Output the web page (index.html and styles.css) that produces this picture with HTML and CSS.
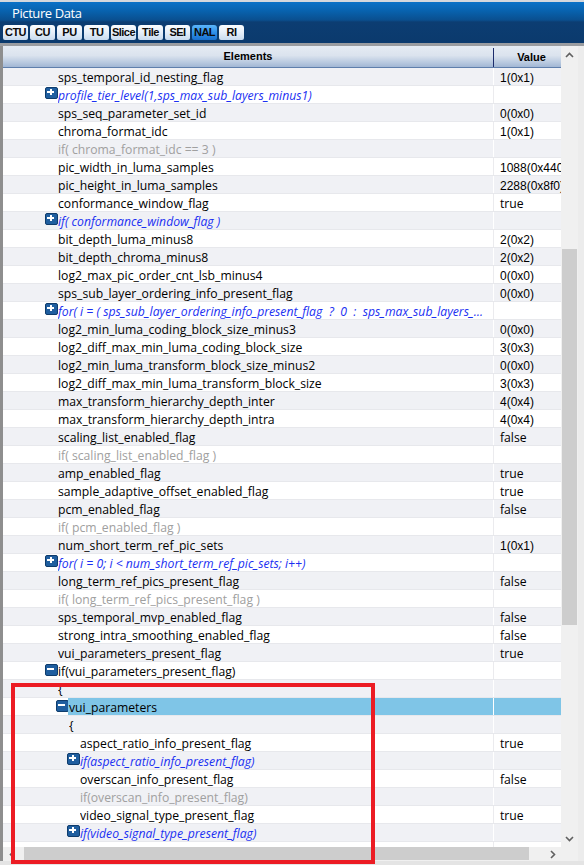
FILE: index.html
```html
<!DOCTYPE html>
<html lang="en">
<head>
    <meta charset="UTF-8">
    <title>Picture Data</title>
    <link rel="stylesheet" href="styles.css">
</head>
<body>
    <div class="window">
        <div class="titlebar">
            <div class="title">Picture Data</div>
            <div class="tabs">
                <span class="tab">CTU</span>
                <span class="tab">CU</span>
                <span class="tab">PU</span>
                <span class="tab">TU</span>
                <span class="tab">Slice</span>
                <span class="tab">Tile</span>
                <span class="tab">SEI</span>
                <span class="tab on">NAL</span>
                <span class="tab">RI</span>
            </div>
        </div>
        <div class="sep"></div>

        <div class="frame">
            <div class="grid">
                <div class="head">
                    <div class="h-el">Elements</div>
                    <div class="h-val">Value</div>
                </div>

                <div class="vscroll">
                    <div class="arrow">
                        <svg width="9" height="6" viewBox="0 0 9 6"><path d="M1 5 L4.5 1.5 L8 5" fill="none" stroke="#606060" stroke-width="1.6"/></svg>
                    </div>
                    <div class="vthumb"></div>
                    <div class="arrow down">
                        <svg width="9" height="6" viewBox="0 0 9 6"><path d="M1 1 L4.5 4.5 L8 1" fill="none" stroke="#606060" stroke-width="1.6"/></svg>
                    </div>
                </div>

                <div class="list">
                    <div class="row"><div class="el"><i class="tog"></i><span class="txt">sps_temporal_id_nesting_flag</span></div><div class="val num">1(0x1)</div></div>
                    <div class="row"><div class="el"><i class="tog plus"></i><span class="txt blue">profile_tier_level(1,sps_max_sub_layers_minus1)</span></div><div class="val"></div></div>
                    <div class="row"><div class="el"><i class="tog"></i><span class="txt">sps_seq_parameter_set_id</span></div><div class="val num">0(0x0)</div></div>
                    <div class="row"><div class="el"><i class="tog"></i><span class="txt">chroma_format_idc</span></div><div class="val num">1(0x1)</div></div>
                    <div class="row"><div class="el"><i class="tog"></i><span class="txt gray">if( chroma_format_idc == 3 )</span></div><div class="val"></div></div>
                    <div class="row"><div class="el"><i class="tog"></i><span class="txt">pic_width_in_luma_samples</span></div><div class="val num">1088(0x440)</div></div>
                    <div class="row"><div class="el"><i class="tog"></i><span class="txt">pic_height_in_luma_samples</span></div><div class="val num">2288(0x8f0)</div></div>
                    <div class="row"><div class="el"><i class="tog"></i><span class="txt">conformance_window_flag</span></div><div class="val">true</div></div>
                    <div class="row"><div class="el"><i class="tog plus"></i><span class="txt blue">if( conformance_window_flag )</span></div><div class="val"></div></div>
                    <div class="row"><div class="el"><i class="tog"></i><span class="txt">bit_depth_luma_minus8</span></div><div class="val num">2(0x2)</div></div>
                    <div class="row"><div class="el"><i class="tog"></i><span class="txt">bit_depth_chroma_minus8</span></div><div class="val num">2(0x2)</div></div>
                    <div class="row"><div class="el"><i class="tog"></i><span class="txt">log2_max_pic_order_cnt_lsb_minus4</span></div><div class="val num">0(0x0)</div></div>
                    <div class="row"><div class="el"><i class="tog"></i><span class="txt">sps_sub_layer_ordering_info_present_flag</span></div><div class="val num">0(0x0)</div></div>
                    <div class="row"><div class="el"><i class="tog plus"></i><span class="txt blue">for( i = ( sps_sub_layer_ordering_info_present_flag  ?  0  :  sps_max_sub_layers_minus1 ); i &lt;= sps_max_sub_layers_minus1; i++ )</span></div><div class="val"></div></div>
                    <div class="row"><div class="el"><i class="tog"></i><span class="txt">log2_min_luma_coding_block_size_minus3</span></div><div class="val num">0(0x0)</div></div>
                    <div class="row"><div class="el"><i class="tog"></i><span class="txt">log2_diff_max_min_luma_coding_block_size</span></div><div class="val num">3(0x3)</div></div>
                    <div class="row"><div class="el"><i class="tog"></i><span class="txt">log2_min_luma_transform_block_size_minus2</span></div><div class="val num">0(0x0)</div></div>
                    <div class="row"><div class="el"><i class="tog"></i><span class="txt">log2_diff_max_min_luma_transform_block_size</span></div><div class="val num">3(0x3)</div></div>
                    <div class="row"><div class="el"><i class="tog"></i><span class="txt">max_transform_hierarchy_depth_inter</span></div><div class="val num">4(0x4)</div></div>
                    <div class="row"><div class="el"><i class="tog"></i><span class="txt">max_transform_hierarchy_depth_intra</span></div><div class="val num">4(0x4)</div></div>
                    <div class="row"><div class="el"><i class="tog"></i><span class="txt">scaling_list_enabled_flag</span></div><div class="val">false</div></div>
                    <div class="row"><div class="el"><i class="tog"></i><span class="txt gray">if( scaling_list_enabled_flag )</span></div><div class="val"></div></div>
                    <div class="row"><div class="el"><i class="tog"></i><span class="txt">amp_enabled_flag</span></div><div class="val">true</div></div>
                    <div class="row"><div class="el"><i class="tog"></i><span class="txt">sample_adaptive_offset_enabled_flag</span></div><div class="val">true</div></div>
                    <div class="row"><div class="el"><i class="tog"></i><span class="txt">pcm_enabled_flag</span></div><div class="val">false</div></div>
                    <div class="row"><div class="el"><i class="tog"></i><span class="txt gray">if( pcm_enabled_flag )</span></div><div class="val"></div></div>
                    <div class="row"><div class="el"><i class="tog"></i><span class="txt">num_short_term_ref_pic_sets</span></div><div class="val num">1(0x1)</div></div>
                    <div class="row"><div class="el"><i class="tog plus"></i><span class="txt blue">for( i = 0; i &lt; num_short_term_ref_pic_sets; i++)</span></div><div class="val"></div></div>
                    <div class="row"><div class="el"><i class="tog"></i><span class="txt">long_term_ref_pics_present_flag</span></div><div class="val">false</div></div>
                    <div class="row"><div class="el"><i class="tog"></i><span class="txt gray">if( long_term_ref_pics_present_flag )</span></div><div class="val"></div></div>
                    <div class="row"><div class="el"><i class="tog"></i><span class="txt">sps_temporal_mvp_enabled_flag</span></div><div class="val">false</div></div>
                    <div class="row"><div class="el"><i class="tog"></i><span class="txt">strong_intra_smoothing_enabled_flag</span></div><div class="val">false</div></div>
                    <div class="row"><div class="el"><i class="tog"></i><span class="txt">vui_parameters_present_flag</span></div><div class="val">true</div></div>
                    <div class="row"><div class="el"><i class="tog minus"></i><span class="txt">if(vui_parameters_present_flag)</span></div><div class="val"></div></div>
                    <div class="row"><div class="el"><i class="tog"></i><span class="txt">{</span></div><div class="val"></div></div>
                    <div class="row sel"><div class="el l1"><i class="tog minus"></i><span class="txt">vui_parameters</span></div><div class="val"></div></div>
                    <div class="row"><div class="el l1"><i class="tog"></i><span class="txt">{</span></div><div class="val"></div></div>
                    <div class="row"><div class="el l2"><i class="tog"></i><span class="txt">aspect_ratio_info_present_flag</span></div><div class="val">true</div></div>
                    <div class="row"><div class="el l2"><i class="tog plus"></i><span class="txt blue">if(aspect_ratio_info_present_flag)</span></div><div class="val"></div></div>
                    <div class="row"><div class="el l2"><i class="tog"></i><span class="txt">overscan_info_present_flag</span></div><div class="val">false</div></div>
                    <div class="row"><div class="el l2"><i class="tog"></i><span class="txt gray">if(overscan_info_present_flag)</span></div><div class="val"></div></div>
                    <div class="row"><div class="el l2"><i class="tog"></i><span class="txt">video_signal_type_present_flag</span></div><div class="val">true</div></div>
                    <div class="row"><div class="el l2"><i class="tog plus"></i><span class="txt blue">if(video_signal_type_present_flag)</span></div><div class="val"></div></div>
                    <div class="row"><div class="el l2"><i class="tog"></i><span class="txt"></span></div><div class="val"></div></div>
                </div>

                <div class="hscroll">
                    <div class="arrow">
                        <svg width="6" height="9" viewBox="0 0 6 9"><path d="M5 1 L1.5 4.5 L5 8" fill="none" stroke="#606060" stroke-width="1.6"/></svg>
                    </div>
                    <div class="hthumb"></div>
                    <div class="arrow right">
                        <svg width="6" height="9" viewBox="0 0 6 9"><path d="M1 1 L4.5 4.5 L1 8" fill="none" stroke="#606060" stroke-width="1.6"/></svg>
                    </div>
                </div>
                <div class="corner"></div>
            </div>
        </div>
        <div class="bottom"></div>
    </div>

    <!-- 标注框 -->
    <div class="mark"></div>
</body>
</html>
```

FILE: styles.css
```css
*{
    margin: 0;
    padding: 0;
    box-sizing: border-box;
}
body{
    width: 584px;
    height: 865px;
    overflow: hidden;
    background-color: #e9e9e9;
    font-family: "Open Sans", "Noto Sans", sans-serif;
    font-size: 12.2px;
    color: #000;
    position: relative;
}

/* 标题栏 */
.titlebar{
    height: 43px;
    border-top: 2px solid #d3d7dd;
    padding-left: 3px;
    background: linear-gradient(to bottom, #0a71c7 0px, #0862ae 9px, #0a4f8f 18px, #0c3d72 20px, #0b3a6d 41px);
}
.title{
    height: 23px;
    padding-left: 9px;
    line-height: 23px;
    font-size: 13px;
    letter-spacing: -0.4px;
    color: #fff;
}
.tabs{
    display: flex;
    gap: 2px;
}
.tab{
    width: 25px;
    height: 15px;
    line-height: 15px;
    text-align: center;
    border-radius: 3px 3px 2px 2px;
    font-family: "Liberation Sans", Arial, sans-serif;
    font-weight: bold;
    font-size: 11px;
    letter-spacing: -0.5px;
    color: #0a0a0a;
    background: linear-gradient(to bottom, #fbfdff 0%, #e6eff9 50%, #c8dbef 100%);
}
.tab.on{
    background: linear-gradient(to bottom, #5bb5f9 0%, #2f90ea 50%, #1a72d0 100%);
}
.sep{
    height: 3px;
    background-color: #9a9ca0;
}

/* 表格区域 */
.frame{
    display: flex;
    border-left: 3px solid #8e8e8e;
    border-right: 6px solid #ececec;
}
.grid{
    display: grid;
    grid-template-columns: 558px 17px;
    grid-template-rows: 22px 779px 14px;
}
.head{
    grid-column: 1;
    grid-row: 1;
    display: flex;
    border-bottom: 1px solid #5f7fac;
    background: linear-gradient(to bottom, #e5ebf3 0%, #dbe3ee 45%, #bccce1 75%, #a2b7d4 100%);
    font-family: "Liberation Sans", Arial, sans-serif;
    font-weight: bold;
    font-size: 11px;
    line-height: 21px;
    color: #000;
}
.h-el{
    width: 490px;
    text-align: center;
}
.h-val{
    flex: 1;
    text-align: center;
    border-left: 1px solid #1c2c6c;
    margin-top: 2px;
    line-height: 19px;
    padding-left: 8px;
}

.list{
    grid-column: 1;
    grid-row: 2;
    overflow: hidden;
    background-color: #fff;
}
.row{
    display: flex;
    height: 18px;
    border-bottom: 1px solid #e7e8ec;
    background-color: #fff;
}
.row:nth-child(odd){
    background-color: #f0f1f5;
}
.el{
    width: 490px;
    display: flex;
    padding-left: 42px;
    overflow: hidden;
}
.el.l1{
    padding-left: 53px;
}
.el.l2{
    padding-left: 64px;
}
.tog{
    flex: none;
    width: 13px;
}
/* 展开/收起的小方块 */
.tog.plus::before,
.tog.minus::before{
    content: "";
    display: block;
    width: 11px;
    height: 10px;
    margin-top: 1px;
    border: 1px solid #0f3c6c;
    border-radius: 2px;
    background: linear-gradient(#fff, #fff) 1px 3px / 7px 2px no-repeat,
                linear-gradient(#fff, #fff) 3.5px 1px / 2px 6px no-repeat,
                #1f5e9f;
}
.tog.minus::before{
    margin-top: 2px;
    background: linear-gradient(#fff, #fff) 1px 3px / 7px 2px no-repeat, #1f5e9f;
}
.txt{
    flex: 1;
    padding-top: 1px;
    line-height: 18px;
    white-space: pre;
    overflow: hidden;
    text-overflow: ellipsis;
    padding-right: 3px;
}
.txt.blue{
    color: #1a30f2;
    font-style: italic;
}
.txt.gray{
    color: #a0a0a0;
}
.val{
    width: 68px;
    padding-left: 6px;
    padding-top: 1px;
    line-height: 18px;
    white-space: nowrap;
    overflow: hidden;
    border-left: 1px solid #ebebee;
}
.row:nth-child(odd) .val{
    border-left-color: #fff;
}
.val.num{
    font-family: "Liberation Sans", Arial, sans-serif;
    font-size: 12px;
}
/* 选中的行 */
.row.sel .txt,
.row.sel .val{
    background-color: #7fc5e7;
}
.row.sel .txt{
    margin-left: -1px;
    padding-left: 1px;
}
.row.sel .val{
    border-left-color: #fff;
}

/* 滚动条 */
.vscroll{
    grid-column: 2;
    grid-row: 1 / 3;
    display: flex;
    flex-direction: column;
    background-color: #f0f0f0;
}
.arrow{
    flex: none;
    width: 17px;
    height: 17px;
    display: flex;
    justify-content: center;
    align-items: center;
}
.vthumb{
    margin: 186px 1px 0 1px;
    height: 376px;
    background-color: #cdcdcd;
}
.arrow.down{
    margin-top: auto;
}
.hscroll{
    grid-column: 1;
    grid-row: 3;
    display: flex;
    background-color: #f0f0f0;
}
.hscroll .arrow{
    height: 14px;
}
.hthumb{
    margin: 0 0 1px 4px;
    width: 505px;
    background-color: #cdcdcd;
}
.arrow.right{
    margin-left: auto;
}
.corner{
    grid-column: 2;
    grid-row: 3;
    background-color: #f0f0f0;
}
.bottom{
    height: 4px;
    background-color: #e4e4e4;
}

/* 红色标注框 */
.mark{
    position: absolute;
    left: 11px;
    top: 683px;
    width: 364px;
    height: 181px;
    border: 4px solid #ec1c24;
}
```
